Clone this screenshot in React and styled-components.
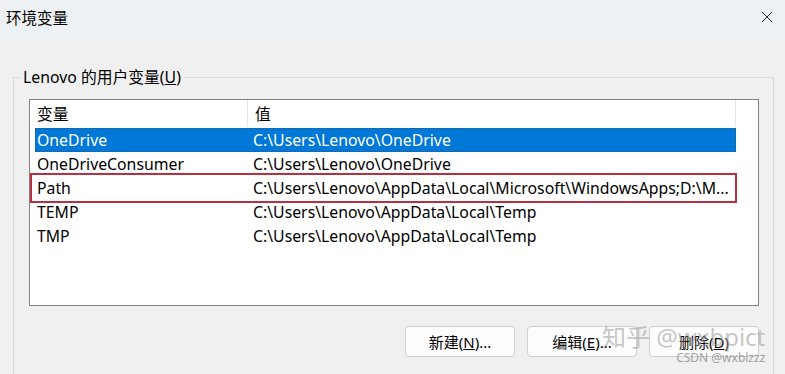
import React from 'react';
import styled, { createGlobalStyle } from 'styled-components';

const GlobalStyle = createGlobalStyle`
  body {
    margin: 0;
    background: #f0f0f0;
    font-family: "Noto Sans", "Noto Sans CJK SC", sans-serif;
  }
`;

const rows = [
    { name: 'OneDrive', value: 'C:\\Users\\Lenovo\\OneDrive', selected: true },
    { name: 'OneDriveConsumer', value: 'C:\\Users\\Lenovo\\OneDrive' },
    { name: 'Path', value: 'C:\\Users\\Lenovo\\AppData\\Local\\Microsoft\\WindowsApps;D:\\M...', marked: true },
    { name: 'TEMP', value: 'C:\\Users\\Lenovo\\AppData\\Local\\Temp' },
    { name: 'TMP', value: 'C:\\Users\\Lenovo\\AppData\\Local\\Temp' },
];

const App = () => {
    return (
        <Window>
            <GlobalStyle />
            <TitleBar>
                <Title>环境变量</Title>
                <CloseIcon viewBox="0 0 14 14">
                    <path d="M1 1 L13 13 M13 1 L1 13" stroke="#1a1a1a" strokeWidth="1.1" fill="none" />
                </CloseIcon>
            </TitleBar>
            <Body>
                <GroupBox>
                    <Legend>Lenovo 的用户变量(<u>U</u>)</Legend>
                    <ListBox>
                        <HeaderRow>
                            <HeaderCell width={218}>变量</HeaderCell>
                            <HeaderCell width={488}>值</HeaderCell>
                        </HeaderRow>
                        {rows.map(r => (
                            <Row key={r.name} selected={r.selected} marked={r.marked}>
                                <NameCell>{r.name}</NameCell>
                                <ValueCell>{r.value}</ValueCell>
                            </Row>
                        ))}
                    </ListBox>
                    <ButtonRow>
                        <Button>新建(<u>N</u>)...</Button>
                        <Button>编辑(<u>E</u>)...</Button>
                        <Button>删除(<u>D</u>)</Button>
                    </ButtonRow>
                </GroupBox>
            </Body>
            <Watermark>
                <Big>知乎 @wxbpict</Big>
                <Small>CSDN @wxblzzz</Small>
            </Watermark>
        </Window>
    )
}

const Window = styled.div`
    position: relative;
    width: 785px;
    height: 374px;
    overflow: hidden;
    background: #f0f0f0;
    color: #000;
`;

const TitleBar = styled.div`
    height: 36px;
    background: #eef1f3;
    display: flex;
    align-items: center;
    justify-content: space-between;
    padding: 0 12px 0 6px;
`;

const Title = styled.div`
    font-size: 15.5px;
    margin-top: -2px;
`;

const CloseIcon = styled.svg`
    width: 12px;
    height: 12px;
    margin-top: -2px;
`;

const Body = styled.div`
    padding: 32px 11px 0 13px;
`;

const GroupBox = styled.fieldset`
    margin: 0;
    padding: 0 14px 40px 15px;
    border: 1px solid #dadada;
    min-width: 0;
`;

const Legend = styled.legend`
    margin-left: -9px;
    padding: 0 3px;
    font-size: 15.8px;
    line-height: 18px;
`;

const ListBox = styled.div`
    margin-top: 13px;
    height: 205px;
    background: #fff;
    border: 1px solid #828282;
`;

const HeaderRow = styled.div`
    display: flex;
    height: 27px;
    margin-bottom: 1px;
`;

const HeaderCell = styled.div`
    width: ${props => props.width}px;
    box-sizing: border-box;
    padding: 0 7px;
    font-size: 15.8px;
    line-height: 28px;
    border-right: 1px solid #e5e5e5;
`;

const Row = styled.div`
    position: relative;
    display: flex;
    height: 24px;
    margin: 0 22px 0 5px;
    font-size: 15.8px;
    line-height: 24px;
    background: ${props => props.selected ? '#0078d7' : 'transparent'};
    color: ${props => props.selected ? '#fff' : '#000'};
    outline: ${props => props.selected ? '1px dotted #2a5a8a' : 'none'};
    outline-offset: -1px;

    &::after {
        content: '';
        display: ${props => props.marked ? 'block' : 'none'};
        position: absolute;
        top: -3px;
        bottom: -3px;
        left: -5px;
        right: -1px;
        border: 2px solid #b8303f;
    }
`;

const NameCell = styled.div`
    width: 213px;
    padding-left: 2px;
    white-space: nowrap;
`;

const ValueCell = styled.div`
    flex: 1;
    padding-left: 3px;
    white-space: nowrap;
    overflow: hidden;
`;

const ButtonRow = styled.div`
    display: flex;
    justify-content: flex-end;
    gap: 12px;
    margin-top: 20px;
`;

const Button = styled.div`
    width: 110px;
    height: 31px;
    box-sizing: border-box;
    display: flex;
    align-items: center;
    justify-content: center;
    background: #fdfdfd;
    border: 1px solid #d0d0d0;
    border-radius: 4px;
    font-size: 15px;
`;

const Watermark = styled.div`
    position: absolute;
    left: 602px;
    top: 322px;
    display: flex;
    flex-direction: column;
    align-items: flex-end;
    pointer-events: none;
`;

const Big = styled.div`
    font-size: 24px;
    line-height: 30px;
    color: rgba(150, 150, 150, 0.55);
`;

const Small = styled.div`
    font-size: 12px;
    line-height: 14px;
    color: rgba(120, 120, 120, 0.7);
    margin-top: -1px;
`;

export default App;
